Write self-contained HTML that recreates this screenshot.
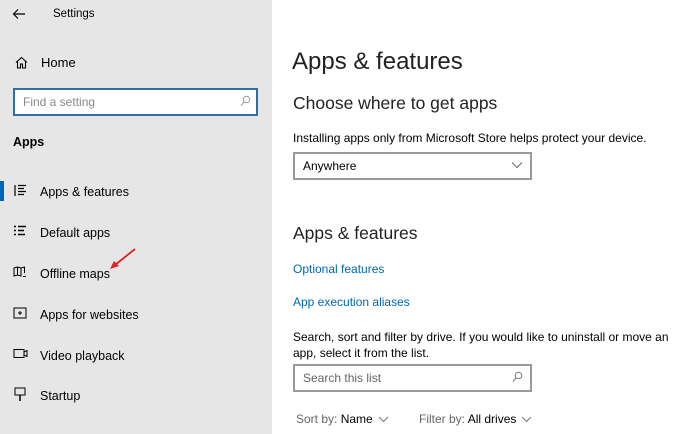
<!DOCTYPE html><html><head><style>
body{margin:0;width:700px;height:434px;overflow:hidden;background:#fff;font-family:"Liberation Sans",sans-serif;color:#000;position:relative}
.a{position:absolute;white-space:nowrap}
#sb{position:absolute;left:0;top:0;width:272px;height:434px;background:#e6e6e6}
.it{font-size:12.5px;left:40px}
svg{position:absolute}
</style></head><body>
<div id="sb">
<svg style="left:12px;top:8px" width="14" height="12" viewBox="0 0 14 12"><path d="M13 6H2M6 1.5L1.5 6L6 10.5" stroke="#000" fill="none" stroke-width="1.2"/></svg>
<div class="a" style="left:53px;top:8px;font-size:11.5px">Settings</div>
<svg style="left:15px;top:56px" width="13" height="13" viewBox="0 0 13 13"><path d="M1 6.5L6.5 1.5L12 6.5M2.5 5.5V12H5.5V8H7.5V12H10.5V5.5" stroke="#000" fill="none" stroke-width="1.1"/></svg>
<div class="a" style="left:41px;top:55px;font-size:13px">Home</div>
<div class="a" style="left:13px;top:88px;width:241px;height:24px;border:2px solid #2f6fa8;background:#fff"></div>
<div class="a" style="left:23px;top:95px;font-size:12px;color:#888">Find a setting</div>
<svg style="left:240px;top:95px" width="11" height="12" viewBox="0 0 11 12"><circle cx="6.5" cy="4.5" r="3.3" stroke="#999" fill="none"/><path d="M4 7L1 10.5" stroke="#999"/></svg>
<div class="a" style="left:13px;top:135px;font-size:12.5px;font-weight:bold">Apps</div>
<div class="a" style="left:0;top:181px;width:4px;height:20px;background:#0067b8"></div>
<svg style="left:14px;top:184px" width="13" height="13" viewBox="0 0 13 13"><path d="M1 1V12M4 1.5H12M4 4.5H10M4 7.5H12M4 10.5H10" stroke="#000" stroke-width="1.2" fill="none"/></svg>
<div class="a it" style="top:185px">Apps &amp; features</div>
<svg style="left:13px;top:225px" width="14" height="12" viewBox="0 0 14 12"><path d="M1 1.5H3M5 1.5H13M1 5.5H3M5 5.5H11M1 9.5H3M5 9.5H12" stroke="#000" stroke-width="1.5" fill="none"/></svg>
<div class="a it" style="top:226px">Default apps</div>
<svg style="left:13px;top:266px" width="14" height="13" viewBox="0 0 14 13"><path d="M1 2V10L4.5 9V1ZM4.5 1L8 2V10L4.5 9M8 2L11.5 1V7M10 10.5H13" stroke="#000" fill="none"/></svg>
<div class="a it" style="top:267px">Offline maps</div>
<svg style="left:13px;top:307px" width="14" height="12" viewBox="0 0 14 12"><rect x="1" y="1" width="12" height="10" stroke="#000" fill="none"/><path d="M5 6H9M7 4V8" stroke="#000"/></svg>
<div class="a it" style="top:308px">Apps for websites</div>
<svg style="left:13px;top:348px" width="15" height="11" viewBox="0 0 15 11"><rect x="1" y="1.5" width="10" height="8" stroke="#000" fill="none"/><path d="M11 4L14 2.5V8.5L11 7" stroke="#000" fill="none"/></svg>
<div class="a it" style="top:349px">Video playback</div>
<svg style="left:14px;top:387px" width="12" height="15" viewBox="0 0 12 15"><rect x="1" y="1" width="10" height="7" stroke="#000" fill="none"/><path d="M6 8V14" stroke="#000" stroke-width="1.5"/></svg>
<div class="a it" style="top:389px">Startup</div>
<svg style="left:108px;top:247px" width="30" height="25" viewBox="0 0 30 25"><path d="M27 2L7 18" stroke="#e02020" stroke-width="1.8"/><path d="M2 22L11 19L6 14Z" fill="#e02020"/></svg>
</div>
<div class="a" style="left:292px;top:48px;font-size:24px;color:#222">Apps &amp; features</div>
<div class="a" style="left:293px;top:93px;font-size:17.5px;color:#222">Choose where to get apps</div>
<div class="a" style="left:293px;top:131px;font-size:12px">Installing apps only from Microsoft Store helps protect your device.</div>
<div class="a" style="left:293px;top:152px;width:235px;height:24px;border:2px solid #999"></div>
<div class="a" style="left:303px;top:159px;font-size:12px">Anywhere</div>
<svg style="left:511px;top:161px" width="12" height="8" viewBox="0 0 12 8"><path d="M1 1.5L6 6.5L11 1.5" stroke="#666" fill="none"/></svg>
<div class="a" style="left:293px;top:223px;font-size:17.5px;color:#222">Apps &amp; features</div>
<div class="a" style="left:293px;top:262px;font-size:12px;color:#0067b8">Optional features</div>
<div class="a" style="left:293px;top:295px;font-size:12px;color:#0067b8">App execution aliases</div>
<div class="a" style="left:293px;top:329px;font-size:12px;line-height:16px">Search, sort and filter by drive. If you would like to uninstall or move an<br>app, select it from the list.</div>
<div class="a" style="left:293px;top:364px;width:235px;height:24px;border:2px solid #999"></div>
<div class="a" style="left:303px;top:371px;font-size:12px;color:#666">Search this list</div>
<svg style="left:512px;top:371px" width="11" height="12" viewBox="0 0 11 12"><circle cx="6.5" cy="4.5" r="3.3" stroke="#777" fill="none"/><path d="M4 7L1 10.5" stroke="#777"/></svg>
<div class="a" style="left:296px;top:412px;font-size:12px;color:#666">Sort by: <span style="color:#000">Name</span></div>
<svg style="left:378px;top:416px" width="11" height="7" viewBox="0 0 11 7"><path d="M1 1L5.5 5.5L10 1" stroke="#777" fill="none"/></svg>
<div class="a" style="left:419px;top:412px;font-size:12px;color:#666">Filter by: <span style="color:#000">All drives</span></div>
<svg style="left:521px;top:416px" width="11" height="7" viewBox="0 0 11 7"><path d="M1 1L5.5 5.5L10 1" stroke="#777" fill="none"/></svg>
</body></html>
